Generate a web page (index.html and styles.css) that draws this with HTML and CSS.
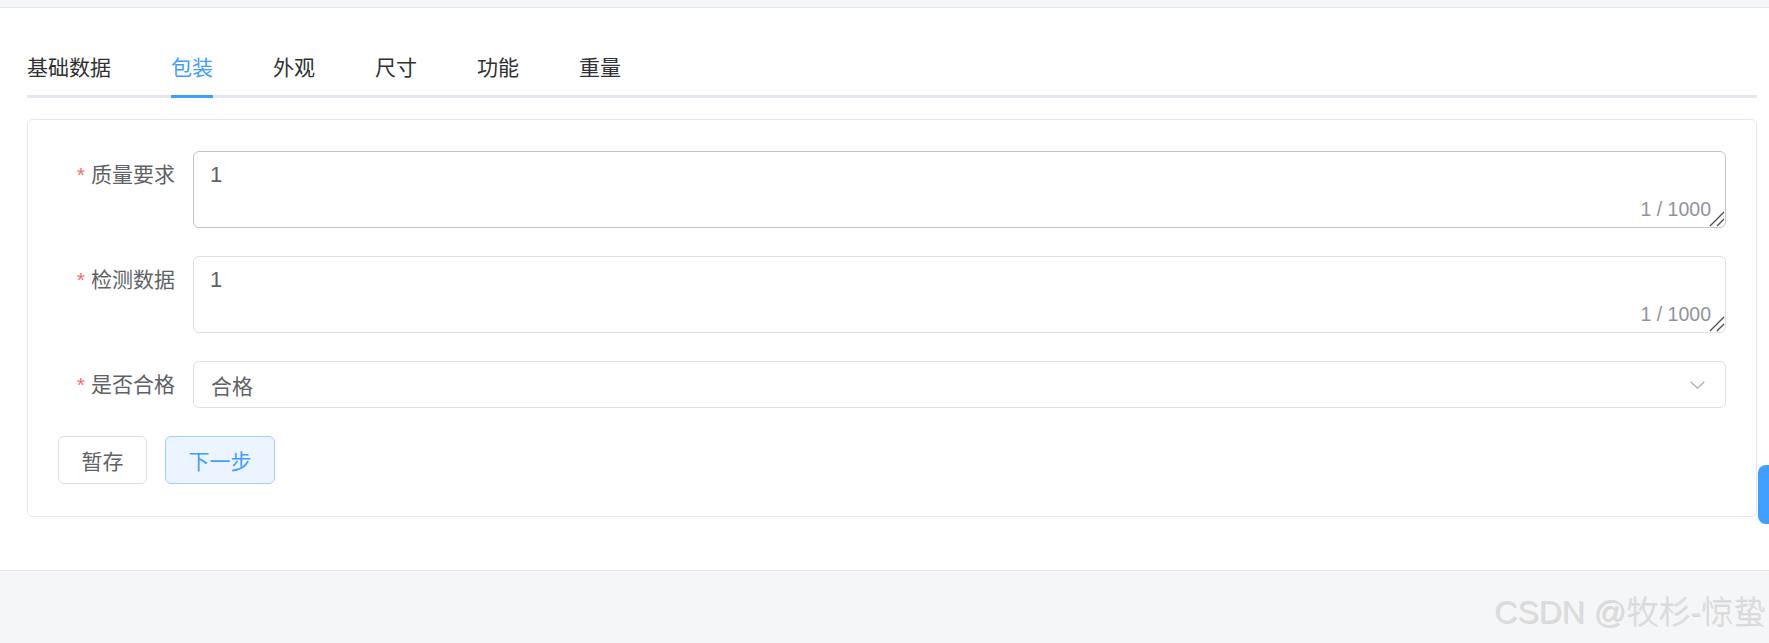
FILE: index.html
```html
<!DOCTYPE html>
<html lang="zh-CN">
<head>
<meta charset="utf-8">
<title>包装</title>
<link rel="stylesheet" href="styles.css">
</head>
<body>
<div class="topbar"></div>
<div class="panel">
  <div class="tabs">
    <div class="tab">基础数据</div>
    <div class="tab active">包装</div>
    <div class="tab">外观</div>
    <div class="tab">尺寸</div>
    <div class="tab">功能</div>
    <div class="tab">重量</div>
  </div>
  <div class="card">
    <div class="form-item">
      <label class="label"><span class="req">*</span>质量要求</label>
      <div class="control">
        <div class="textarea-wrap">
          <textarea class="textarea hovered">1</textarea>
          <span class="count">1 / 1000</span>
          <svg class="grip" width="16" height="16" viewBox="0 0 16 16"><line x1="1" y1="15" x2="15" y2="1" stroke="#4a4a4a" stroke-width="1.3"/><line x1="8" y1="15" x2="15" y2="8" stroke="#4a4a4a" stroke-width="1.3"/></svg>
        </div>
      </div>
    </div>
    <div class="form-item">
      <label class="label"><span class="req">*</span>检测数据</label>
      <div class="control">
        <div class="textarea-wrap">
          <textarea class="textarea">1</textarea>
          <span class="count">1 / 1000</span>
          <svg class="grip" width="16" height="16" viewBox="0 0 16 16"><line x1="1" y1="15" x2="15" y2="1" stroke="#4a4a4a" stroke-width="1.3"/><line x1="8" y1="15" x2="15" y2="8" stroke="#4a4a4a" stroke-width="1.3"/></svg>
        </div>
      </div>
    </div>
    <div class="form-item">
      <label class="label"><span class="req">*</span>是否合格</label>
      <div class="control">
        <div class="select">
          <span class="select-text">合格</span>
          <svg class="chevron" width="15" height="8" viewBox="0 0 15 8"><polyline points="0.7,0.7 7.5,7.2 14.3,0.7" fill="none" stroke="#a8abb2" stroke-width="1.2"/></svg>
        </div>
      </div>
    </div>
    <div class="actions">
      <button class="btn">暂存</button>
      <button class="btn btn-plain-primary">下一步</button>
    </div>
  </div>
  <div class="side-tab"></div>
</div>
<div class="footer">
  <span class="watermark">CSDN @牧杉-惊蛰</span>
</div>
</body>
</html>
```
FILE: styles.css
```css
html, body {
  margin: 0;
  padding: 0;
}
body {
  background: #f5f6f8;
  font-family: "Liberation Sans", "Noto Sans CJK SC", sans-serif;
  width: 1769px;
  height: 643px;
  overflow: hidden;
}
.topbar {
  height: 7px;
  border-bottom: 1px solid #e4e7ed;
}
.panel {
  position: relative;
  box-sizing: border-box;
  height: 563px;
  background: #fff;
  border-bottom: 1px solid #e4e7ed;
  padding: 30px 12px 0 27px;
}
.tabs {
  display: flex;
  height: 60px;
  box-shadow: inset 0 -3px 0 #e4e7ed;
}
.tab {
  font-size: 21px;
  line-height: 60px;
  color: #303133;
  margin-right: 60px;
}
.tab.active {
  color: #409eff;
  box-shadow: inset 0 -3px 0 #409eff;
}
.card {
  margin-top: 21px;
  border: 1px solid #e4e7ed;
  border-radius: 6px;
  padding: 31px 30px 32px 30px;
}
.form-item {
  display: flex;
  margin-bottom: 28px;
}
.label {
  flex: none;
  width: 135px;
  box-sizing: border-box;
  padding-right: 18px;
  text-align: right;
  font-size: 21px;
  line-height: 47px;
  color: #606266;
}
.req {
  color: #f56c6c;
  margin-right: 6px;
}
.control {
  flex: 1;
  min-width: 0;
}
.textarea-wrap {
  position: relative;
}
.textarea {
  display: block;
  width: 100%;
  height: 77px;
  box-sizing: border-box;
  border: 1px solid #dcdfe6;
  border-radius: 6px;
  padding: 7px 16px;
  font-family: "Liberation Sans", "Noto Sans CJK SC", sans-serif;
  font-size: 22px;
  line-height: 1.45;
  color: #606266;
  resize: none;
  outline: none;
  background: #fff;
}
.textarea.hovered {
  border-color: #c0c4cc;
}
.count {
  position: absolute;
  right: 15px;
  bottom: 9px;
  font-size: 19.5px;
  line-height: 19px;
  color: #909399;
  background: #fff;
}
.grip {
  position: absolute;
  right: 1px;
  bottom: 1px;
  pointer-events: none;
}
.select {
  box-sizing: border-box;
  height: 47px;
  border: 1px solid #dcdfe6;
  border-radius: 6px;
  padding: 0 20px 0 17px;
  display: flex;
  align-items: center;
  justify-content: space-between;
}
.select-text {
  font-size: 21px;
  color: #606266;
}
.chevron {
  display: block;
}
.actions {
  display: flex;
  gap: 18px;
}
.btn {
  height: 48px;
  padding: 0 22.5px;
  font-family: "Liberation Sans", "Noto Sans CJK SC", sans-serif;
  font-size: 21px;
  color: #606266;
  background: #fff;
  border: 1px solid #dcdfe6;
  border-radius: 6px;
}
.btn-plain-primary {
  color: #409eff;
  background: #ecf5ff;
  border-color: #a0cfff;
}
.side-tab {
  position: absolute;
  right: 0;
  top: 457px;
  width: 11px;
  height: 59px;
  background: #409eff;
  border-radius: 8px 0 0 8px;
}
.footer {
  height: 71px;
  display: flex;
  justify-content: flex-end;
  padding-right: 4px;
}
.watermark {
  margin-top: 21px;
  font-size: 32px;
  font-weight: 300;
  line-height: 40px;
  height: 40px;
  color: #dcdcdc;
  text-shadow: 1px 1px 0 rgba(0, 0, 0, 0.12);
}
```
